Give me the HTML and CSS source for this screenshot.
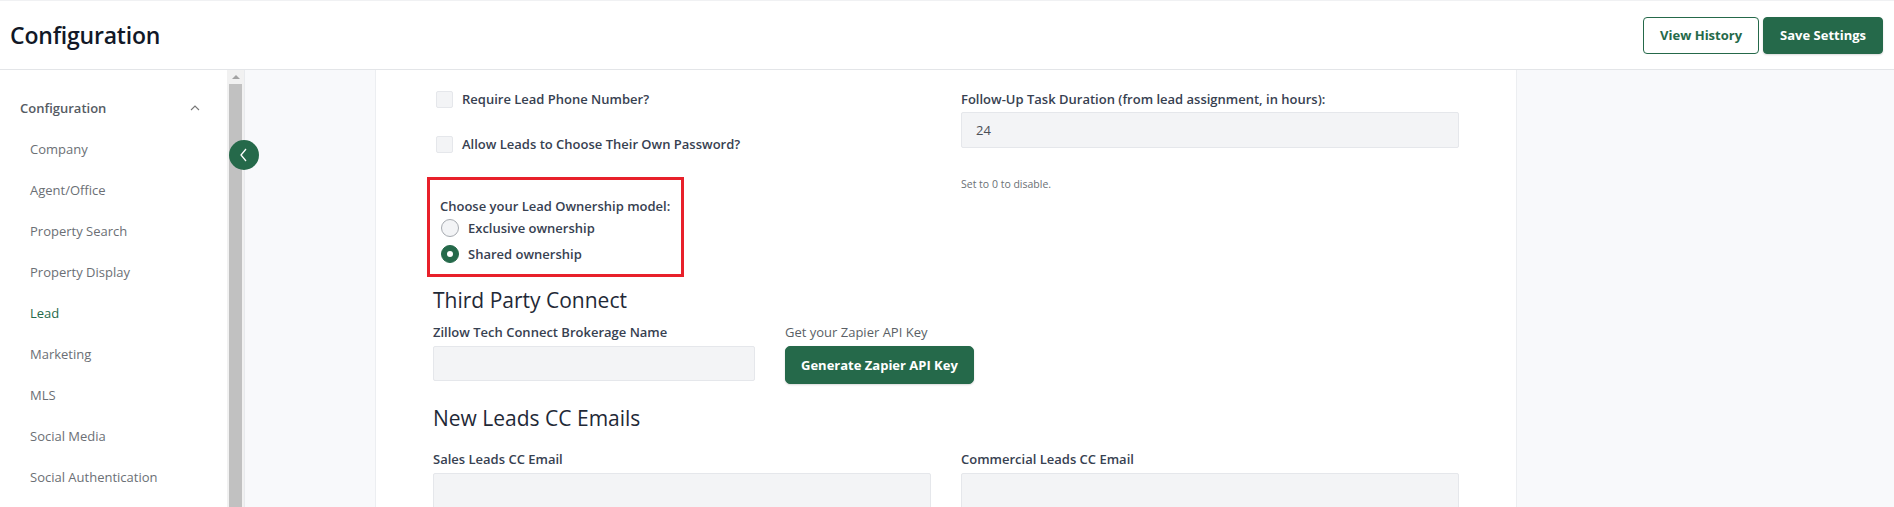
FILE: index.html
```html
<!DOCTYPE html>
<html lang="en">
<head>
    <meta charset="UTF-8">
    <meta name="viewport" content="width=device-width, initial-scale=1.0">
    <title>Configuration</title>
    <link rel="stylesheet" href="styles.css">
</head>
<body>
    <header class="topbar">
        <h1 class="page-title">Configuration</h1>
        <div class="actions">
            <button class="btn btn-outline">View History</button>
            <button class="btn btn-primary">Save Settings</button>
        </div>
    </header>

    <div class="layout">
        <aside class="sidebar">
            <nav class="nav">
                <div class="nav-group">
                    <span>Configuration</span>
                    <svg class="caret" width="10" height="6" viewBox="0 0 10 6"><path d="M1 5 L5 1 L9 5" fill="none" stroke="#777" stroke-width="1.1"/></svg>
                </div>
                <a class="nav-item">Company</a>
                <a class="nav-item">Agent/Office</a>
                <a class="nav-item">Property Search</a>
                <a class="nav-item">Property Display</a>
                <a class="nav-item active">Lead</a>
                <a class="nav-item">Marketing</a>
                <a class="nav-item">MLS</a>
                <a class="nav-item">Social Media</a>
                <a class="nav-item">Social Authentication</a>
            </nav>
            <div class="scrollbar">
                <div class="scroll-arrow"></div>
                <div class="scroll-thumb"></div>
            </div>
            <button class="collapse-btn">
                <svg width="12" height="14" viewBox="0 0 12 14"><path d="M8 1 L3 7 L8 13" fill="none" stroke="#fff" stroke-width="1.3"/></svg>
            </button>
        </aside>

        <main class="main">
            <div class="card">
                <div class="two-col">
                    <div class="col-left">
                        <label class="check-row">
                            <span class="checkbox"></span>
                            Require Lead Phone Number?
                        </label>
                        <label class="check-row second">
                            <span class="checkbox"></span>
                            Allow Leads to Choose Their Own Password?
                        </label>
                        <div class="ownership">
                            <p class="ownership-title">Choose your Lead Ownership model:</p>
                            <label class="radio-row">
                                <span class="radio"></span>
                                Exclusive ownership
                            </label>
                            <label class="radio-row">
                                <span class="radio checked"></span>
                                Shared ownership
                            </label>
                        </div>
                    </div>
                    <div class="col-right">
                        <label class="field-label">Follow-Up Task Duration (from lead assignment, in hours):</label>
                        <div class="input">24</div>
                        <p class="help">Set to 0 to disable.</p>
                    </div>
                </div>

                <h3 class="section-title">Third Party Connect</h3>
                <div class="zapier-row">
                    <div class="zillow">
                        <label class="field-label">Zillow Tech Connect Brokerage Name</label>
                        <div class="input"></div>
                    </div>
                    <div class="zapier">
                        <p class="small-note">Get your Zapier API Key</p>
                        <button class="btn btn-primary btn-lg">Generate Zapier API Key</button>
                    </div>
                </div>

                <h3 class="section-title cc-title">New Leads CC Emails</h3>
                <div class="two-col cc-row">
                    <div>
                        <label class="field-label">Sales Leads CC Email</label>
                        <div class="input tall"></div>
                    </div>
                    <div>
                        <label class="field-label">Commercial Leads CC Email</label>
                        <div class="input tall"></div>
                    </div>
                </div>
            </div>
        </main>
    </div>
</body>
</html>
```

FILE: styles.css
```css
* {
    margin: 0;
    padding: 0;
    box-sizing: border-box;
    font-family: "Open Sans", "Noto Sans", sans-serif;
}
body {
    height: 100vh;
    overflow: hidden;
    background: #fff;
    display: flex;
    flex-direction: column;
}
button {
    font-family: inherit;
    cursor: pointer;
}
.topbar {
    height: 70px;
    flex-shrink: 0;
    border-top: 1px solid #f0f1f3;
    border-bottom: 1px solid #e3e5e8;
    display: flex;
    align-items: center;
    justify-content: space-between;
    padding: 0 11px 0 10px;
}
.page-title {
    font-size: 23px;
    font-weight: 600;
    color: #111827;
    letter-spacing: -0.2px;
}
.actions {
    display: flex;
    gap: 4px;
}
.btn {
    height: 37px;
    padding: 0 16px;
    border-radius: 4px;
    font-size: 13px;
    font-weight: 700;
}
.btn-outline {
    background: #fff;
    color: #25694a;
    border: 1px solid #25694a;
}
.btn-primary {
    background: #25694a;
    color: #fff;
    border: 1px solid #25694a;
    box-shadow: 0 1px 2px rgba(0, 0, 0, 0.15);
}
.layout {
    flex: 1;
    display: flex;
    min-height: 0;
}
.sidebar {
    width: 244px;
    flex-shrink: 0;
    display: flex;
    position: relative;
}
.nav {
    width: 227px;
    padding-top: 18px;
}
.nav-group {
    height: 40px;
    display: flex;
    align-items: center;
    justify-content: space-between;
    padding: 0 27px 0 20px;
    font-size: 13px;
    font-weight: 600;
    color: #555b63;
}
.nav-item {
    display: flex;
    align-items: center;
    height: 41px;
    padding-left: 30px;
    font-size: 13px;
    color: #6b6f75;
}
.nav-item.active {
    color: #25694a;
}
.scrollbar {
    width: 17px;
    background: #f1f1f1;
    display: flex;
    flex-direction: column;
    align-items: center;
}
.scroll-arrow {
    margin-top: 5px;
    width: 0;
    height: 0;
    border-left: 4px solid transparent;
    border-right: 4px solid transparent;
    border-bottom: 4px solid #a3a3a3;
}
.scroll-thumb {
    margin-top: 5px;
    width: 13px;
    flex: 1;
    background: #c1c1c1;
}
.collapse-btn {
    position: absolute;
    left: 229px;
    top: 70px;
    width: 30px;
    height: 30px;
    border-radius: 50%;
    border: none;
    background: #25694a;
    display: flex;
    align-items: center;
    justify-content: center;
    z-index: 2;
}
.main {
    flex: 1;
    background: #f8f9fb;
    border-left: 1px solid #e8eaed;
    padding-left: 130px;
    overflow: hidden;
}
.card {
    width: 1142px;
    height: 100%;
    background: #fff;
    border-left: 1px solid #eceef1;
    border-right: 1px solid #eceef1;
    padding: 0 57px;
}
.two-col {
    display: grid;
    grid-template-columns: 498px 498px;
    column-gap: 30px;
}
.col-left {
    padding-top: 19px;
}
.check-row {
    display: flex;
    align-items: center;
    gap: 9px;
    height: 20px;
    padding-left: 3px;
    font-size: 13px;
    font-weight: 600;
    color: #374151;
}
.check-row.second {
    margin-top: 25px;
}
.checkbox {
    width: 17px;
    height: 17px;
    background: #f3f4f6;
    border: 1px solid #e5e7eb;
    border-radius: 2px;
}
.ownership {
    margin-top: 23px;
    margin-left: -6px;
    width: 257px;
    border: 3px solid #e8202a;
    padding: 17px 0 7px 10px;
}
.ownership-title {
    font-size: 13px;
    font-weight: 600;
    color: #374151;
    line-height: 18px;
}
.radio-row {
    display: flex;
    align-items: center;
    gap: 9px;
    height: 26px;
    padding-left: 1px;
    font-size: 13px;
    font-weight: 600;
    color: #374151;
}
.radio {
    width: 18px;
    height: 18px;
    border-radius: 50%;
    background: #f3f4f6;
    border: 1px solid #a7abb1;
}
.radio.checked {
    background: #25694a;
    border-color: #25694a;
    position: relative;
}
.radio.checked::after {
    content: "";
    position: absolute;
    left: 5px;
    top: 5px;
    width: 6px;
    height: 6px;
    border-radius: 50%;
    background: #fff;
}
.col-right {
    padding-top: 20px;
}
.field-label {
    display: block;
    font-size: 13px;
    font-weight: 600;
    color: #374151;
    line-height: 18px;
}
.input {
    margin-top: 4px;
    height: 36px;
    background: #f3f4f6;
    border: 1px solid #e5e7eb;
    border-radius: 2px;
    padding: 0 14px;
    display: flex;
    align-items: center;
    font-size: 13px;
    color: #4b5057;
}
.help {
    margin-top: 29px;
    font-size: 10.5px;
    color: #6b7075;
    line-height: 15px;
}
.section-title {
    margin-top: 10px;
    font-size: 21px;
    font-weight: 400;
    color: #1f2937;
    line-height: 26px;
}
.zapier-row {
    display: flex;
    gap: 30px;
    margin-top: 10px;
}
.zillow {
    width: 322px;
}
.zillow .input {
    margin-top: 5px;
    height: 35px;
}
.small-note {
    font-size: 13px;
    color: #5a5f66;
    line-height: 18px;
    margin-bottom: 5px;
}
.btn-lg {
    height: 38px;
    padding: 0 15px;
    border-radius: 5px;
}
.cc-title {
    margin-top: 21px;
}
.cc-row {
    margin-top: 19px;
}
.cc-row .input {
    margin-top: 5px;
}
.input.tall {
    height: 60px;
}
```
